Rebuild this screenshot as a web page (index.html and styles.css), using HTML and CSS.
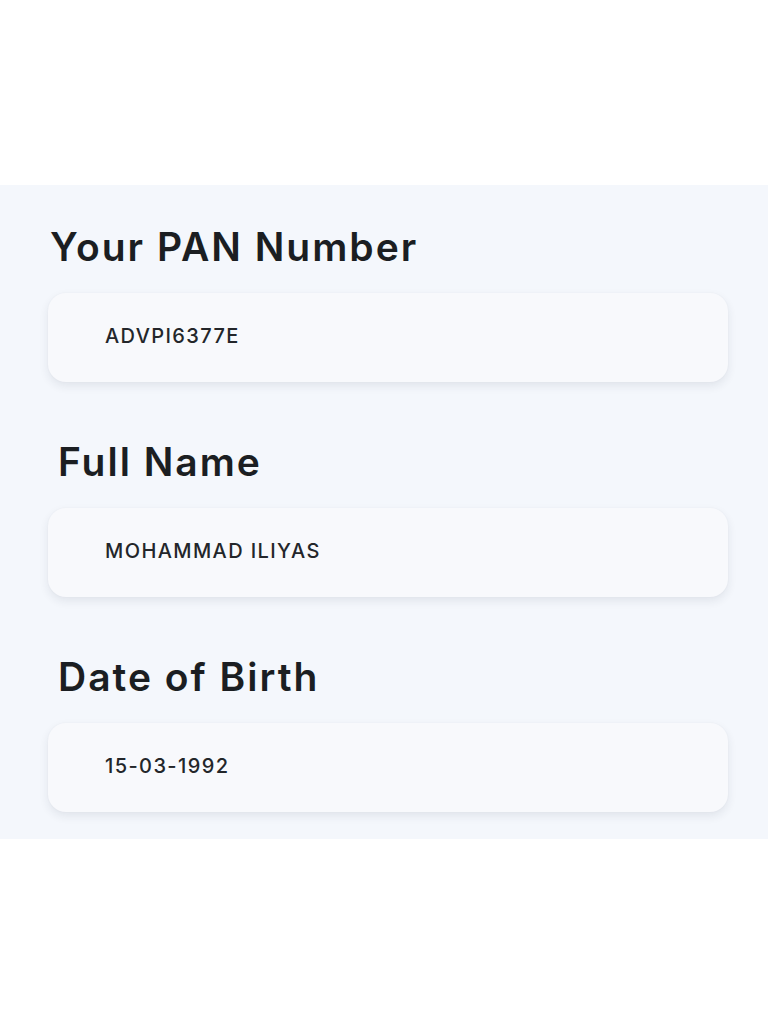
FILE: index.html
```html
<!DOCTYPE html>
<html lang="en">
<head>
<meta charset="utf-8">
<title>PAN Details</title>
<link rel="stylesheet" href="styles.css">
</head>
<body>
<main class="page">
  <section class="panel">
    <h2 class="label label-first">Your PAN Number</h2>
    <div class="field"><span class="value">ADVPI6377E</span></div>
    <h2 class="label">Full Name</h2>
    <div class="field"><span class="value">MOHAMMAD ILIYAS</span></div>
    <h2 class="label">Date of Birth</h2>
    <div class="field"><span class="value">15-03-1992</span></div>
  </section>
</main>
</body>
</html>
```

FILE: styles.css
```css
html, body {
  margin: 0;
  padding: 0;
  background: #ffffff;
}
body {
  font-family: Inter, "Noto Sans", "Liberation Sans", sans-serif;
  color: #1b1e22;
}
.page {
  padding-top: 185px;
}
.panel {
  background: #f4f7fc;
  padding: 43px 40px 27px 48px;
  display: flex;
  flex-direction: column;
}
.label {
  margin: 61px 0 27px 10px;
  font-size: 39px;
  line-height: 38px;
  font-weight: 600;
  color: #1b1e22;
  letter-spacing: 2px;
}
.label-first {
  margin-top: 0;
  margin-left: 2px;
}
.field {
  height: 89px;
  box-sizing: border-box;
  border-radius: 18px;
  background: #f8f9fc;
  box-shadow: 0 4px 10px rgba(30, 40, 70, 0.09), 0 0 2px rgba(30, 40, 70, 0.04);
  display: flex;
  align-items: center;
  padding: 0 0 4px 57px;
}
.value {
  font-size: 20px;
  font-weight: 500;
  color: #23262a;
  letter-spacing: 1.4px;
}
```
